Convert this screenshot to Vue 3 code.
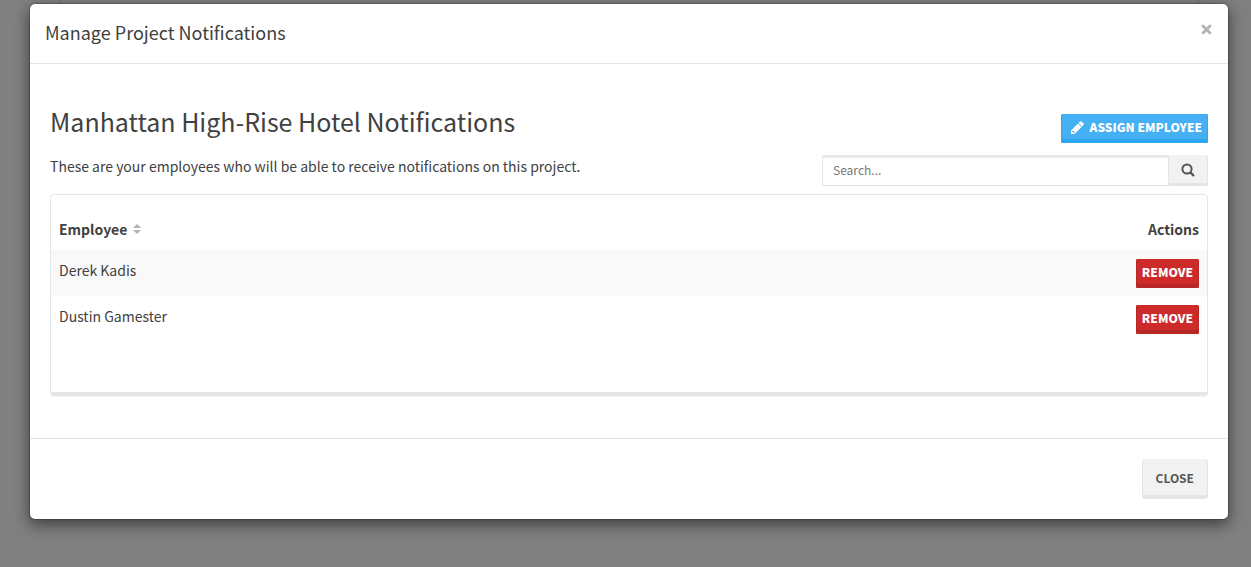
<script setup>
import { ref, computed } from 'vue'

const search = ref('')
const ascending = ref(true)
const employees = ref([
  { id: 1, name: 'Derek Kadis' },
  { id: 2, name: 'Dustin Gamester' },
])

const visible = computed(() => {
  const term = search.value.trim().toLowerCase()
  const rows = employees.value.filter((e) => e.name.toLowerCase().includes(term))
  return rows.sort((a, b) => a.name.localeCompare(b.name) * (ascending.value ? 1 : -1))
})

function remove(id) {
  employees.value = employees.value.filter((e) => e.id !== id)
}
</script>

<template>
  <div class="backdrop">
    <section class="modal" role="dialog" aria-labelledby="modal-title">
      <header class="modal-header">
        <h1 id="modal-title">Manage Project Notifications</h1>
        <button class="dismiss" type="button" aria-label="Dismiss">
          <svg viewBox="0 0 11 11" width="11" height="11" aria-hidden="true">
            <path d="M2 2 9 9M9 2 2 9" fill="none" stroke="currentColor" stroke-width="2.8" stroke-linecap="round" />
          </svg>
        </button>
      </header>

      <div class="modal-body">
        <div class="intro">
          <div class="intro-text">
            <h2>Manhattan High-Rise Hotel Notifications</h2>
            <p>These are your employees who will be able to receive notifications on this project.</p>
          </div>
          <div class="tools">
            <button class="btn btn-info" type="button">
              <svg viewBox="0 0 1536 1536" width="13" height="13" aria-hidden="true">
                <path fill="currentColor" fill-rule="evenodd" d="M363 1408l91-91-235-235-91 91v107h128v128zM832 288l416 416-832 832H0v-416zM1515 384q0 53-37 90l-166 166-416-416 166-165q36-38 90-38 53 0 91 38l235 234q37 39 37 91z" />
              </svg>
              ASSIGN EMPLOYEE
            </button>
            <form class="search" @submit.prevent>
              <input v-model="search" type="text" placeholder="Search..." aria-label="Search employees" />
              <button type="submit" aria-label="Search">
                <svg viewBox="0 0 14 14" width="14" height="14" aria-hidden="true">
                  <circle cx="6" cy="6" r="4.6" fill="none" stroke="currentColor" stroke-width="2" />
                  <path d="M9.6 9.6 12.4 12.4" stroke="currentColor" stroke-width="2.2" stroke-linecap="round" />
                </svg>
              </button>
            </form>
          </div>
        </div>

        <div class="panel">
          <table>
            <thead>
              <tr>
                <th scope="col">
                  <button class="sort" type="button" @click="ascending = !ascending">
                    Employee
                    <svg viewBox="0 0 8 10" width="8" height="10" aria-hidden="true">
                      <path fill="currentColor" d="M4 0 8 4H0zM0 6h8L4 10z" />
                    </svg>
                  </button>
                </th>
                <th scope="col" class="actions">Actions</th>
              </tr>
            </thead>
            <tbody>
              <tr v-for="employee in visible" :key="employee.id">
                <td>{{ employee.name }}</td>
                <td class="actions">
                  <button class="btn btn-danger" type="button" @click="remove(employee.id)">REMOVE</button>
                </td>
              </tr>
            </tbody>
          </table>
        </div>
      </div>

      <footer class="modal-footer">
        <button class="btn-close" type="button">CLOSE</button>
      </footer>
    </section>
  </div>
</template>

<style>
body {
  background: #808080;
}
</style>

<style scoped>
.backdrop,
.backdrop * {
  box-sizing: border-box;
}

.backdrop {
  position: relative;
  min-height: 100vh;
  padding: 3px 22px 20px 29px;
  background: #808080;
  color: #414141;
  font-family: "Noto Sans CJK SC", "Noto Sans", sans-serif;
  font-size: 14px;
  line-height: 20px;
}

.backdrop::before {
  content: "";
  position: absolute;
  inset: 0 52px auto 59px;
  height: 20px;
  border: solid #747474;
  border-width: 0 1px;
}

button,
input {
  margin: 0;
  font-family: inherit;
}

button {
  cursor: pointer;
}

.modal {
  position: relative;
  border: 1px solid rgba(0, 0, 0, 0.2);
  border-radius: 6px;
  background: #fff;
  background-clip: padding-box;
  box-shadow: 0 5px 15px rgba(0, 0, 0, 0.5);
}

.modal-header {
  display: flex;
  justify-content: space-between;
  align-items: flex-start;
  padding: 14px 15px 16px;
  border-bottom: 1px solid #e5e5e5;
}

h1,
h2,
p {
  margin: 0;
  font-weight: 400;
}

h1 {
  font-size: 18px;
  line-height: 29px;
}

.dismiss {
  display: flex;
  padding: 6px 1px;
  border: 0;
  background: none;
  color: #b3b3b3;
}

.modal-body {
  padding: 40px 20px 42px;
}

.intro {
  display: flex;
}

.intro-text {
  flex: 2;
}

h2 {
  font-size: 25px;
  line-height: 34px;
}

p {
  margin-top: 18px;
}

.tools {
  display: flex;
  flex: 1;
  flex-direction: column;
  align-items: flex-end;
  gap: 12px;
  padding-top: 10px;
}

.btn {
  display: inline-flex;
  align-items: center;
  height: 29px;
  padding: 0 6px 3px;
  border: 0;
  border-radius: 2px;
  color: #fff;
  font-size: 12px;
  font-weight: 900;
  line-height: 20px;
}

.btn-info {
  gap: 6px;
  padding-left: 10px;
  background: #45b0f3;
  box-shadow: inset 1px 0 #2ea6f2, inset -1px 0 #2ea6f2, inset 0 -4px #2ea6f2;
}

.btn-danger {
  background: #cd2a2a;
  box-shadow: inset 1px 0 #b92626, inset -1px 0 #b92626, inset 0 -4px #b92626;
}

.search {
  display: flex;
  align-self: stretch;
  height: 31px;
}

.search input {
  flex: 1;
  min-width: 0;
  padding: 0 10px 2px;
  border: 1px solid #e5e5e5;
  border-radius: 2px 0 0 2px;
  box-shadow: inset 0 2px #ececec;
  background: #fff;
  color: #555;
  font-size: 12px;
  outline: 0;
}

.search input::placeholder {
  color: #777;
  opacity: 1;
}

.search button {
  display: flex;
  align-items: center;
  justify-content: center;
  width: 39px;
  padding: 0 2px 2px 0;
  border: 0;
  border-radius: 0 2px 2px 0;
  background: #f2f2f2;
  box-shadow: inset -1px 0 #e5e5e5, inset 0 -3px #e5e5e5;
  color: #555;
}

.panel {
  margin-top: 8px;
  padding: 15px 0 50px;
  border: 1px solid #e5e5e5;
  border-bottom-width: 4px;
  border-radius: 4px;
  box-shadow: 0 1px #f2f2f2;
}

table {
  width: 100%;
  border-collapse: collapse;
}

th,
td {
  padding: 9px 8px 8px;
  text-align: left;
  vertical-align: top;
}

th {
  padding: 9px 8px 11px;
  font-weight: 700;
}

td {
  height: 46px;
  line-height: 22px;
}

.actions {
  text-align: right;
}

.actions .btn {
  vertical-align: top;
}

tbody tr:nth-child(odd) {
  background: #f9f9f9;
}

.sort {
  display: inline-flex;
  align-items: center;
  gap: 6px;
  padding: 0;
  border: 0;
  background: none;
  color: inherit;
  font-size: 14px;
  font-weight: 700;
  line-height: 20px;
}

.sort svg {
  color: #b3b3b3;
}

.modal-footer {
  display: flex;
  justify-content: flex-end;
  padding: 20px;
  border-top: 1px solid #e5e5e5;
}

.btn-close {
  height: 40px;
  padding: 0 14px 3px;
  border: 0;
  border-radius: 4px;
  background: #f2f2f2;
  box-shadow: inset 1px 0 #e5e5e5, inset -1px 0 #e5e5e5, inset 0 -4px #e5e5e5;
  color: #555;
  font-size: 12px;
  font-weight: 700;
}
</style>
